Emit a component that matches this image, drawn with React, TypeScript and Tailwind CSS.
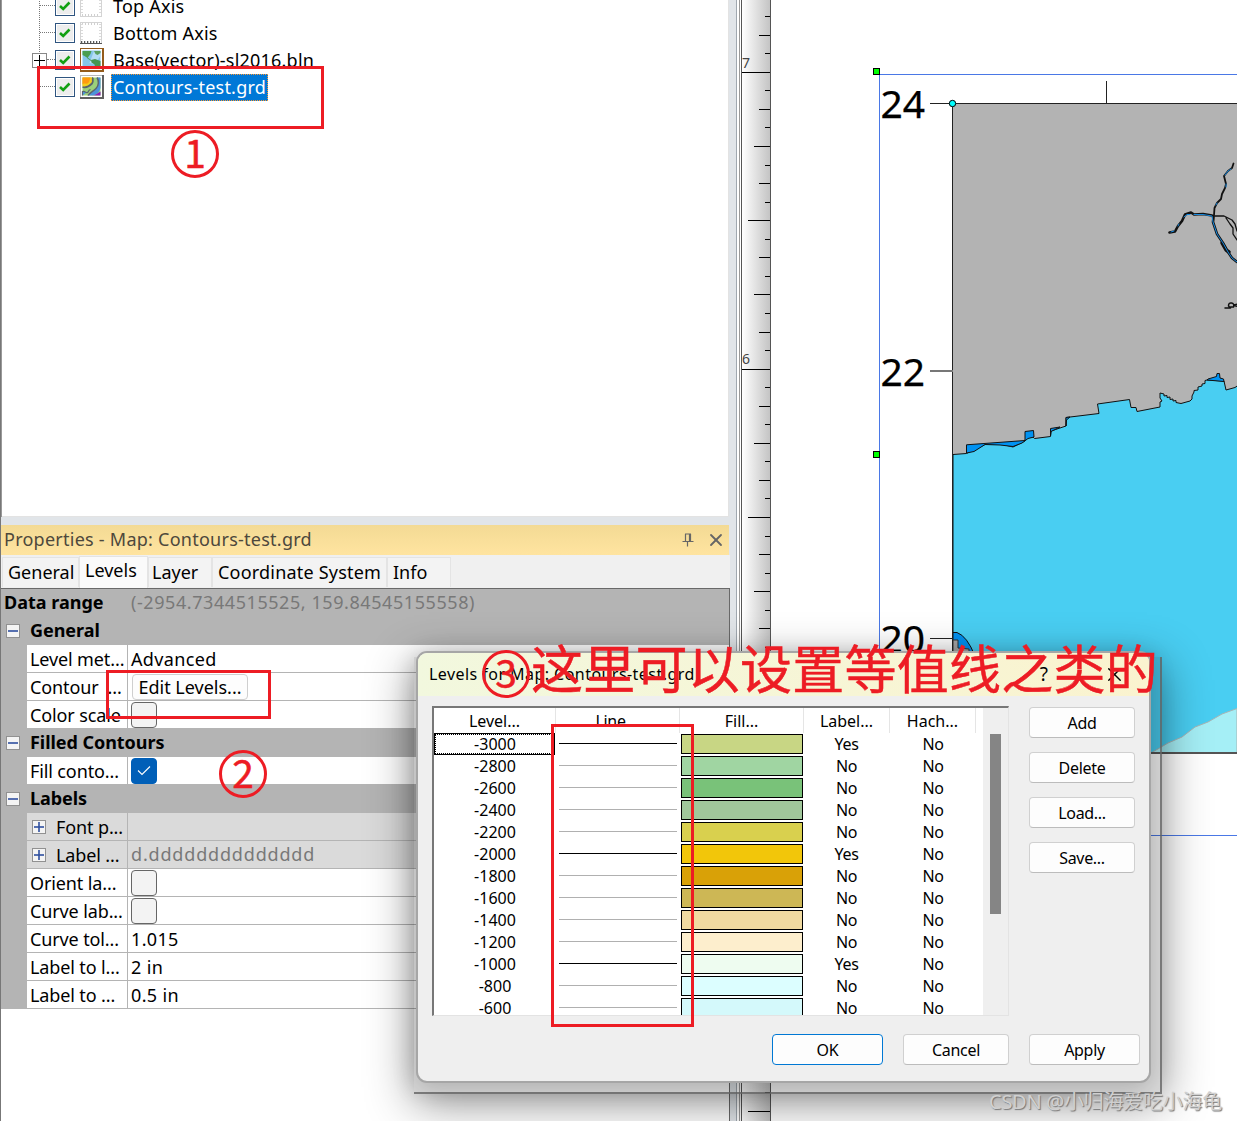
import React from "react";
import clsx from "clsx";
import { X } from "lucide-react";

const treeItems = [
  { label: "Top Axis", icon: "top" },
  { label: "Bottom Axis", icon: "bottom" },
  { label: "Base(vector)-sl2016.bln", icon: "base", expandable: true },
  { label: "Contours-test.grd", icon: "contours", selected: true },
];

const tabs = [
  { label: "General", width: "w-[77px]" },
  { label: "Levels", width: "w-[69px]", active: true },
  { label: "Layer", width: "w-[64px]" },
  { label: "Coordinate System", width: "w-[175px] tracking-[0.2px]" },
  { label: "Info", width: "w-[64px]" },
];

type Property = {
  name: string;
  value?: string;
  kind?: "header" | "button" | "check";
  checked?: boolean;
  expandable?: boolean;
};

const properties: Property[] = [
  { name: "General", kind: "header" },
  { name: "Level met...", value: "Advanced" },
  { name: "Contour  ...", value: "Edit Levels...", kind: "button" },
  { name: "Color scale", kind: "check" },
  { name: "Filled Contours", kind: "header" },
  { name: "Fill conto...", kind: "check", checked: true },
  { name: "Labels", kind: "header" },
  { name: "Font p...", expandable: true },
  { name: "Label ...", value: "d.dddddddddddddd", expandable: true },
  { name: "Orient la...", kind: "check" },
  { name: "Curve lab...", kind: "check" },
  { name: "Curve tol...", value: "1.015" },
  { name: "Label to l...", value: "2 in" },
  { name: "Label to ...", value: "0.5 in" },
];

const levels = [
  { level: "-3000", fill: "#c8d684", major: true },
  { level: "-2800", fill: "#a0d5a2" },
  { level: "-2600", fill: "#79c279" },
  { level: "-2400", fill: "#a0c79b" },
  { level: "-2200", fill: "#d9d04e" },
  { level: "-2000", fill: "#f2c60a", major: true },
  { level: "-1800", fill: "#d9a107" },
  { level: "-1600", fill: "#cdb755" },
  { level: "-1400", fill: "#f0daa0" },
  { level: "-1200", fill: "#fdeecd" },
  { level: "-1000", fill: "#eefcf0", major: true },
  { level: "-800", fill: "#dcfeff" },
  { level: "-600", fill: "#d4f9fb" },
];

const TreeIcon = ({ name }: { name: string }) => {
  if (name === "base") {
    return (
      <svg width="24" height="24" viewBox="0 0 24 24">
        <rect width="24" height="24" fill="#945c1c" />
        <rect x="1" y="1" width="21" height="21" fill="#fff" />
        <rect x="2.500" y="2.500" width="18" height="18" fill="#86c6ea" />
        <path d="M14 3h6.500v5l-6 8-5-1z" fill="#b5def5" />
        <path d="M2.500 3h9l-1 3-3 4-3-2-2-1z" fill="#4a9e50" />
        <path d="M14 3h6.500v2l-3 2-2-1z" fill="#5aa060" />
        <path d="M7 9l4 3v1l-4-3z" fill="#4c9c50" />
        <path d="M11 12l4-1 5.500 2v7.500h-5l-1-4-3-2z" fill="#459653" />
      </svg>
    );
  }
  if (name === "contours") {
    return (
      <svg width="24" height="24" viewBox="0 0 24 24">
        <rect width="24" height="24" fill="#606060" />
        <rect width="22" height="22" fill="#b8b8b8" />
        <rect x="1" y="1" width="21" height="21" fill="#fff" />
        <rect x="2.500" y="2.500" width="18" height="18" fill="#9bd07a" />
        <path d="M17 2.500c2 3 2 8-1 11s-7 5-8 7h5c4-1 7-4 7.500-8v-10z" fill="#4b93dc" />
        <path d="M17 2.500c2 3 2 8-1 11s-7 5-8 7" fill="none" stroke="#5c6470" strokeWidth="1.500" />
        <path d="M2.500 20.500v-4c3-1 3 2 5 1s0-2 3-3" fill="#4b9be0" stroke="#5c6470" strokeWidth="1.200" />
        <path d="M2.500 2.500h10.500c-1 2 1 4-1 6s-5 5-9.500 3z" fill="#f2cf1d" />
        <path d="M13 2.500c-1 2 1 4-1 6s-5 5-9.500 3.500" fill="none" stroke="#58636e" strokeWidth="1.800" />
        <path d="M2.500 2.500h8c-1 3-1 5-3 6s-3-1-5 1z" fill="#ff9a10" />
        <path d="M12 20.500c3 0 5-2 8.500-4v4z" fill="#8a1fb8" />
      </svg>
    );
  }
  return (
    <svg width="22" height="22" viewBox="0 0 22 22">
      <rect x=".5" y=".5" width="21" height="21" fill="#fff" stroke="#d4d4d4" />
      <path d="M2 2h18M2 20h18" stroke="#d0d0d0" strokeWidth="2" strokeDasharray="1 2" />
      <path d="M2 2v18M20 2v18" stroke="#dadada" strokeWidth="2" strokeDasharray="1 2" />
      {name === "bottom" && (
        <>
          <path d="M0 21.500h22" stroke="#555" />
          <path d="M1 20h20" stroke="#555" strokeWidth="2" strokeDasharray="1 2" />
        </>
      )}
    </svg>
  );
};

const ObjectTree = () => (
  <div className="mr-px h-[517px] border-r border-b border-[#e3e3e3] bg-white overflow-hidden">
    <div className="-mt-2 relative">
      <div className="absolute left-[37px] top-0 h-[60px] border-l border-dotted border-[#777]"></div>
      {treeItems.map((item) => (
        <div className="relative flex h-[27px] items-center" key={item.label}>
          <div className="flex w-[53px] shrink-0 items-center pl-[30px]">
            {item.expandable ? (
              <div className="mt-px flex h-[15px] w-[15px] shrink-0 items-center justify-center border border-[#888] bg-white">
                <svg width="11" height="11" viewBox="0 0 11 11">
                  <path d="M0 5.500h11M5.500 0v11" stroke="#000" />
                </svg>
              </div>
            ) : (
              <div className="w-2 shrink-0"></div>
            )}
            <div className="grow border-t border-dotted border-[#777]"></div>
          </div>
          <div className="h-5 w-5 shrink-0 border border-[#2f5580] bg-[#ededed] ring-1 ring-inset ring-white">
            <svg width="18" height="18" viewBox="0 0 18 18">
              <path d="M4 9l3.200 3L13.500 5.500" fill="none" stroke="#12a012" strokeWidth="2.600" />
            </svg>
          </div>
          <div className="ml-[5px] flex w-6 shrink-0">
            <TreeIcon name={item.icon} />
          </div>
          <div
            className={clsx(
              "ml-[7px] flex h-[27px] translate-y-px items-center border border-dotted pr-px pb-px pl-px text-[18px] whitespace-nowrap",
              item.selected
                ? "border-[#ff9830] bg-[#0078d7] tracking-[0.2px] text-white"
                : "border-transparent tracking-[0.22px] text-black"
            )}
          >
            {item.label}
          </div>
        </div>
      ))}
    </div>
  </div>
);

const Expander = ({ open }: { open?: boolean }) => (
  <svg width="14" height="14" viewBox="0 0 14 14" className="shrink-0">
    <rect x=".5" y=".5" width="13" height="13" fill="#f4f4f4" stroke="#919191" />
    <path d="M2 7h10" stroke="#2f4f9f" strokeWidth="1.600" />
    {!open && <path d="M7 2v10" stroke="#2f4f9f" strokeWidth="1.600" />}
  </svg>
);

const CheckBox = ({ checked }: { checked?: boolean }) => (
  <div
    className={clsx(
      "ml-[3px] flex h-[26px] w-[26px] items-center justify-center rounded-[4px] border",
      checked ? "border-[#005fb8] bg-[#005fb8]" : "border-[#666] bg-[#f3f3f3]"
    )}
  >
    {checked && (
      <svg width="14" height="10" viewBox="0 0 14 10">
        <path d="M1 4.500l4 4 8-8" fill="none" stroke="#fff" strokeWidth="1.100" />
      </svg>
    )}
  </div>
);

const PropertyRow = ({ item }: { item: Property }) => {
  if (item.kind === "header") {
    return (
      <div className="flex h-7 items-center pl-[5px] font-bold">
        <Expander open />
        <span className="mb-[2px] ml-[10px] tracking-[-0.05px]">{item.name}</span>
      </div>
    );
  }
  return (
    <div className="flex h-7 pl-[26px]">
      <div
        className={clsx(
          "flex grow border-b border-[#b4b4b4]",
          item.expandable ? "bg-[#dadada]" : "bg-white"
        )}
      >
        <div className="flex w-[101px] shrink-0 items-center border-r border-[#b4b4b4] pl-[3px] tracking-[-0.12px] whitespace-pre">
          {item.expandable && (
            <span className="mr-[10px] ml-[2px] flex">
              <Expander />
            </span>
          )}
          <span className="mt-[2px]">{item.name}</span>
        </div>
        <div className="flex items-center">
          {item.kind === "check" && <CheckBox checked={item.checked} />}
          {item.kind === "button" && (
            <button className="ml-1 h-[26px] w-[116px] rounded-[4px] border border-[#cfcfcf] bg-[#fdfdfd] leading-none">
              {item.value}
            </button>
          )}
          {!item.kind && (
            <span
              className={clsx(
                "pl-[3px]",
                item.expandable ? "tracking-[0.83px] text-[#787878]" : "mt-[2px] tracking-[0.35px]"
              )}
            >
              {item.value}
            </span>
          )}
        </div>
      </div>
    </div>
  );
};

const PropertiesPanel = () => (
  <div className="flex grow flex-col text-[18px] whitespace-nowrap text-black">
    <div className="mr-px flex h-[30px] items-center bg-linear-to-b from-[#f3da94] to-[#ffe4a0] pl-[3px] text-[#4d483c]">
      <span className="mb-[2px] grow tracking-[0.25px]">Properties - Map: Contours-test.grd</span>
      <svg width="12" height="14" viewBox="0 0 12 14" className="mr-[12px]">
        <path d="M3 1h6M3.500 1v7M7.500 1v7M8.500 1v7M.5 8.500h11M5.500 8.500v5" fill="none" stroke="#666" strokeWidth="1.200" />
      </svg>
      <X size={20} strokeWidth={2.2} className="mr-[3px] text-[#666]" />
    </div>
    <div className="flex h-[33px] items-end bg-[#f0f0f0] pl-[1px]">
      {tabs.map((tab) => (
        <div
          key={tab.label}
          className={clsx(
            "flex items-center border border-b-0 border-[#e4e4e4]",
            tab.label === "Layer" ? "pl-[3px]" : "pl-[5px]",
            tab.width,
            tab.active ? "h-8 bg-[#fafafa] pb-[5px]" : "mb-[1px] h-[30px] bg-[#f3f3f3]"
          )}
        >
          {tab.label}
        </div>
      ))}
    </div>
    <div className="border-t border-r border-[#696969] bg-[#b4b4b4]">
      <div className="flex h-7 items-center pb-[2px] pl-[3px]">
        <span className="w-[127px] font-bold">Data range</span>
        <span className="tracking-[0.57px] text-[#787878]">(-2954.7344515525, 159.84545155558)</span>
      </div>
      {properties.map((item, id) => (
        <PropertyRow item={item} key={id} />
      ))}
    </div>
    <div className="grow border-r border-[#696969] bg-white"></div>
  </div>
);

const Ruler = () => {
  const ticks = Array.from({ length: 61 }, (_, i) => i - 3);
  const tickStart = (i: number) => {
    if (i % 16 === 0) return 0;
    if (i % 8 === 0) return 6;
    if (i % 4 === 0) return 12;
    if (i % 2 === 0) return 17;
    return 23;
  };
  return (
    <div className="h-full w-[30px] shrink-0 border-x border-[#555] bg-linear-to-r from-white to-[#c4c4c4]">
      <svg width="28" height="1121" viewBox="0 0 28 1121" shapeRendering="crispEdges">
        {ticks.map((i) => (
          <path key={i} d={`M${tickStart(i)} ${Math.floor(72.3 + i * 18.55) + 0.5}H28`} stroke="#000" />
        ))}
        <text x="0" y="68" fontSize="14" fill="#444">7</text>
        <text x="0" y="364" fontSize="14" fill="#444">6</text>
        <text x="0" y="661" fontSize="14" fill="#444">5</text>
      </svg>
    </div>
  );
};

const MapCanvas = () => (
  <svg width="466" height="1121" viewBox="771 0 466 1121" className="shrink-0 bg-white">
    <rect x="953" y="103" width="284" height="650" fill="#b3b3b3" />
    <path
      d="M953 454.500L966.500 453.500L985 444.500L1001 444L1013 447L1025 441L1026 437L1033 437L1034.500 438.500L1050.500 436.500L1051 431L1066 426L1066 417.500L1099 413.500L1097.500 404L1129.500 399.500L1131 407.500H1136L1137 411.500L1160 407V402L1162 401L1160 398V393L1164 394V396L1167 395.500V397.500L1170 397V399.500L1173 399V401L1176 400.500V402.500L1181 403.500L1190 401L1192 399V396L1194 392V390.500L1198 390V387L1202 386V384L1205 383.500V380.500L1207 380L1224 381L1226 390L1235 387.500L1240 384V753H953Z"
      fill="#49cef2"
      stroke="#111"
      strokeWidth="1"
    />
    <g fill="#0092f2" stroke="#111" strokeWidth="1">
      <path d="M966.500 453V444.800L1025 440.500V431.500L1033.500 430.500L1034 437L1028 438.500L1022 443L1013 446.500L1000 445L985 444.500L974 451.500Z" />
      <path d="M1050.500 436V428.500L1060 427L1051 431.500Z" />
      <path d="M1066 426V417.500L1070 417L1066.500 420Z" />
      <path d="M1207 380L1208 379L1216.500 376.500L1217 373.500H1219.500L1220 378L1223.500 379L1224 381.500Z" />
      <path d="M953 632.500H957Q967 636 975 656H953Z" />
    </g>
    <path d="M953 640h5v8l11 1v5h-16z" fill="#a8a8a8" stroke="#333" />
    <path d="M1151 753L1168 743L1182 737L1195 727L1208 722L1222 714L1237 708.500V753Z" fill="#a5eff6" stroke="#a8b4b4" />
    {/* rivers */}
    <g fill="none" strokeLinecap="round" strokeLinejoin="round">
      <g stroke="#111" strokeWidth="2.600">
        <path d="M1169.500 232.500L1175 231.500L1178 226L1182 221L1185 214.500L1188 213.500L1191 212.500L1194 214.500L1203 214L1212 215.500L1213.500 217L1213 222L1217 234L1223 243L1228 252L1232 258L1237 262" />
        <path d="M1222 243L1226 250L1229 252" strokeWidth="3.500" />
        <path d="M1214 215L1214.500 208L1217 203L1221 199L1222 194L1225 188L1226 184L1224 176L1228 171L1232 168L1233.500 163.500" strokeWidth="1.800" />
        <path d="M1213 216L1224 216L1232 220L1235 224L1237 231M1226 218L1230 224L1233 228L1233 234L1237 240" strokeWidth="1.300" />
        <path d="M1225 308h5.500l-2-2q0-3.500 3-3t2 4h-3M1234 305l4-1M1234 305.500l4 1" strokeWidth="1.500" />
      </g>
      <g stroke="#1688dd" strokeWidth="1">
        <path d="M1171 232L1174 231M1178 226L1179 224M1184 217L1187 214.500L1190 214.500M1194 214.500L1203 214.500L1212 216L1213 222L1217 234L1223 243L1228 252L1232 258L1237 262" />
        <path d="M1225 175L1228 171L1231 169M1226 184v3M1217 203l-1 2" />
      </g>
    </g>
    <g stroke="#222" shapeRendering="crispEdges">
      <path d="M930 103.500H1237M952.500 103V753M1106.500 81V103M930 638.500H953" />
      <path d="M930 371H953" stroke="#777" strokeWidth="2" />
      <path d="M953 753H1237" stroke="#555" strokeWidth="2" />
    </g>
    <path d="M1237 74.500H879.500V835.500H1237" fill="none" stroke="#4a78e6" shapeRendering="crispEdges" />
    <rect x="873.500" y="68.500" width="6" height="6" fill="#0f0" stroke="#000" />
    <rect x="873.500" y="451.500" width="6" height="6" fill="#0f0" stroke="#000" />
    <circle cx="952.500" cy="103.500" r="3.200" fill="#0ff" stroke="#000" />
    <g fontSize="39" fill="#000" stroke="#000" strokeWidth=".25">
      <text x="880.500" y="118">24</text>
      <text x="880.500" y="386">22</text>
      <text x="880.500" y="653">20</text>
    </g>
  </svg>
);

const DialogButton = ({ label, wide, primary }: { label: string; wide?: boolean; primary?: boolean }) => (
  <button
    className={clsx(
      "h-[31px] rounded-[4px] border bg-[#fdfdfd] leading-none tracking-[-0.3px]",
      wide ? "w-[111px]" : "w-[106px]",
      primary ? "border-[#0078d4]" : "border-[#d0d0d0] border-b-[#bcbcbc]"
    )}
  >
    {label}
  </button>
);

const LevelsTable = () => (
  <div className="flex h-[310px] w-[577px] border-t-2 border-r border-b border-l-2 border-[#e3e3e3] border-t-[#777] border-l-[#777] bg-white">
    <div className="w-[549px] shrink-0 overflow-hidden text-center">
      <div className="flex h-[25px] items-center">
        <div className="h-full w-[122px] border-r border-[#e5e5e5] leading-[26px]">Level...</div>
        <div className="h-full w-[124px] border-r border-[#e5e5e5] pr-[14px] leading-[26px] tracking-[-0.3px]">Line</div>
        <div className="h-full w-[124px] border-r border-[#e5e5e5] leading-[26px]">Fill...</div>
        <div className="h-full w-[86px] border-r border-[#e5e5e5] leading-[26px]">Label...</div>
        <div className="h-full w-[86px] border-r border-[#e5e5e5] leading-[26px]">Hach...</div>
      </div>
      {levels.map((row, id) => (
        <div className="flex h-[22px] items-center leading-[22px]" key={row.level}>
          <div
            className={clsx(
              "h-[22px] w-[121px] pl-px",
              id === 0 && "border border-black leading-5 outline-1 -outline-offset-2 outline-dotted outline-black"
            )}
          >
            {row.level}
          </div>
          <div className="w-[126px] pr-1 pb-[2px] pl-1">
            <div className={clsx("h-px", row.major ? "bg-black" : "bg-[#b0b0b0]")}></div>
          </div>
          <div className="h-5 w-[122px] border border-black" style={{ backgroundColor: row.fill }}></div>
          <div className="w-[87px] tracking-[-0.3px]">{row.major ? "Yes" : "No"}</div>
          <div className="w-[86px] tracking-[-0.3px]">No</div>
        </div>
      ))}
    </div>
    <div className="grow bg-[#efefef] pt-[26px] pl-[7px]">
      <div className="h-[180px] w-[11px] bg-[#858585]"></div>
    </div>
  </div>
);

const LevelsDialog = () => (
  <>
    <div className="absolute top-[657px] left-[414px] h-[437px] w-[748px] border-r-2 border-b-2 border-[#666]/80 bg-black/15 shadow-[0_8px_44px_rgba(0,0,0,0.45)]"></div>
    <div className="absolute top-[651px] left-[416px] flex h-[432px] w-[735px] flex-col overflow-hidden rounded-[11px] border-2 border-[#a6a6a6] bg-[#efefef] text-[16px] text-black shadow-[0_6px_24px_rgba(0,0,0,0.2)]">
      <div className="flex h-[43px] shrink-0 items-center bg-linear-to-r from-[#f2f8de] to-[#faf3cf] pl-[11px]">
        <span className="mb-[2px] grow tracking-[0.45px]">Levels for Map: Contours-test.grd</span>
        <span className="mr-[55px] text-[19px]">?</span>
        <X size={23} strokeWidth={1.4} className="mr-[23px]" />
      </div>
      <div className="flex gap-5 pt-[10px] pl-[14px]">
        <LevelsTable />
        <div className="flex flex-col gap-[14px] pt-[1px]">
          <DialogButton label="Add" />
          <DialogButton label="Delete" />
          <DialogButton label="Load..." />
          <DialogButton label="Save..." />
        </div>
      </div>
      <div className="flex justify-end gap-5 pt-[18px] pr-[9px]">
        <DialogButton label="OK" wide primary />
        <DialogButton label="Cancel" />
        <DialogButton label="Apply" wide />
      </div>
    </div>
  </>
);

const StepNumber = ({ n }: { n: number }) => (
  <span className="inline-flex h-12 w-12 shrink-0 items-center justify-center rounded-full border-3 border-[#ed1c24] pb-[6px] text-[39px] leading-none">
    {n}
  </span>
);

// red marks drawn over the windows
const Annotations = () => (
  <div className="font-['Noto_Sans_CJK_SC',sans-serif] text-[52px] leading-[60px] whitespace-nowrap text-[#ed1c24] [-webkit-text-stroke:0.5px_#ed1c24]">
    <div className="absolute top-[66px] left-[37px] h-[63px] w-[287px] border-3 border-[#ed1c24]"></div>
    <div className="absolute top-[670px] left-[106px] h-[49px] w-[165px] border-3 border-[#ed1c24]"></div>
    <div className="absolute top-[724px] left-[551px] h-[303px] w-[143px] border-3 border-[#ed1c24]"></div>
    <div className="absolute top-[130px] left-[171px] flex">
      <StepNumber n={1} />
    </div>
    <div className="absolute top-[750px] left-[219px] flex">
      <StepNumber n={2} />
    </div>
    <div className="absolute top-[637px] left-[482px] flex items-start">
      <div className="mt-[13px] flex">
        <StepNumber n={3} />
      </div>
      <span className="pl-px tracking-[0.25px]">这里可以设置等值线之类的</span>
    </div>
  </div>
);

const App = () => {
  return (
    <div className="relative flex h-[1121px] w-[1237px] overflow-hidden bg-white font-['Noto_Sans','Noto_Sans_CJK_SC',sans-serif]">
      <div className="flex w-[730px] shrink-0 flex-col border-l border-[#777] bg-[#e1e5e9]">
        <div className="border-l border-[#999]">
          <ObjectTree />
        </div>
        <div className="h-2 shrink-0"></div>
        <PropertiesPanel />
      </div>
      <div className="w-[7px] shrink-0 border-r border-[#a0a8b0] bg-[#e1e5e9]"></div>
      <div className="w-[4px] shrink-0 border-r border-l-2 border-white bg-[#999]"></div>
      <Ruler />
      <MapCanvas />
      <LevelsDialog />
      <Annotations />
      <div className="absolute top-[1087px] left-[989px] text-[20px] leading-[29px] tracking-[-0.25px] whitespace-nowrap text-[#d0d0d0] [text-shadow:1px_1px_1px_#777]">
        CSDN @小归海爱吃小海龟
      </div>
    </div>
  );
};

export default App;
